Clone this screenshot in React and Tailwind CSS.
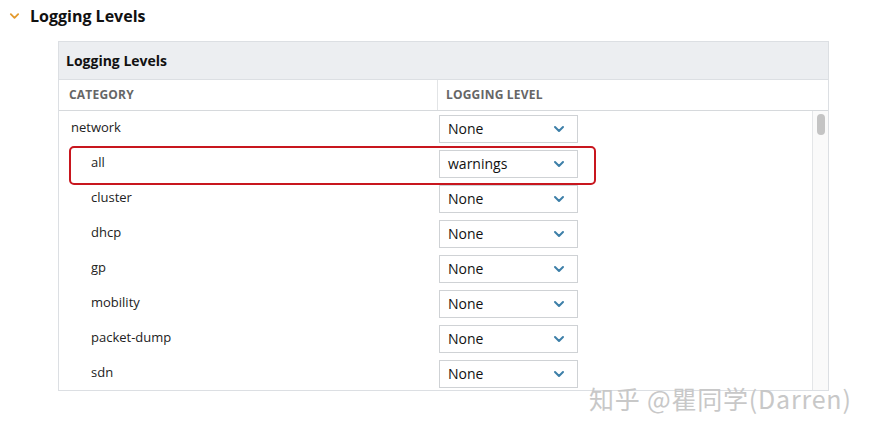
import React from 'react';

const rows = [
  { name: 'network', level: 'None', child: false },
  { name: 'all', level: 'warnings', child: true },
  { name: 'cluster', level: 'None', child: true },
  { name: 'dhcp', level: 'None', child: true },
  { name: 'gp', level: 'None', child: true },
  { name: 'mobility', level: 'None', child: true },
  { name: 'packet-dump', level: 'None', child: true },
  { name: 'sdn', level: 'None', child: true },
];

const Chevron = ({ className }) => (
  <svg viewBox="0 0 12 8" className={className} fill="none" stroke="currentColor" strokeWidth="2" strokeLinecap="round" strokeLinejoin="round">
    <path d="M2 2l4 4 4-4" />
  </svg>
);

const App = () => {
  return (
    <div className="relative w-[869px] h-[434px] bg-white overflow-hidden" style={{ fontFamily: '"Open Sans", "Noto Sans CJK SC", sans-serif' }}>
      {/* Section title */}
      <div className="flex items-center h-[32px] pl-[9px]">
        <Chevron className="w-[11px] h-[8px] text-[#e39a2d]" />
        <span className="ml-[10px] text-[16px] font-bold text-[#111]">Logging Levels</span>
      </div>

      {/* Panel */}
      <div className="ml-[58px] mt-[9px] w-[771px] border border-[#dcdfe3]">
        <div className="h-[38px] bg-[#eceef1] flex items-center px-[7px] border-b border-[#dcdfe3]">
          <span className="text-[14px] font-bold text-[#111]">Logging Levels</span>
        </div>
        <div className="flex h-[31px] border-b border-[#d6d9dc] text-[12px] font-bold text-[#666] tracking-[0.2px]">
          <div className="w-[379px] flex items-center pl-[10px] border-r border-[#e2e4e6]">CATEGORY</div>
          <div className="flex-1 flex items-center pl-[8px]">LOGGING LEVEL</div>
        </div>
        <div className="flex h-[279px] overflow-hidden">
          <div className="flex-1">
            {rows.map(r => (
              <div key={r.name} className="flex h-[35px] items-center">
                <div className={`w-[380px] text-[13px] text-[#222] -mt-[1px] ${r.child ? 'pl-[32px]' : 'pl-[12px]'}`}>{r.name}</div>
                <div className="w-[139px] h-[28px] border border-[#cfd2d5] flex items-center justify-between pl-[8px] pr-[12px] bg-white">
                  <span className="text-[14px] text-[#111]">{r.level}</span>
                  <Chevron className="w-[12px] h-[8px] text-[#3d7fa8]" />
                </div>
              </div>
            ))}
          </div>
          <div className="w-[16px] border-l border-[#e4e6e8] bg-[#fafafa] flex justify-center pt-[3px]">
            <div className="w-[8px] h-[21px] rounded-full bg-[#c4c4c4]" />
          </div>
        </div>
      </div>

      {/* Highlight */}
      <div className="absolute left-[69px] top-[146px] w-[527px] h-[39px] border-[2.5px] border-[#c8161e] rounded-[5px]" />

      {/* Watermark */}
      <div className="absolute left-[589px] top-[380px] text-[25px] text-[#c8c8c8] tracking-[0.8px]" style={{ fontFamily: '"Noto Sans CJK SC", "DejaVu Sans", sans-serif' }}>
        知乎 @瞿同学(Darren)
      </div>
    </div>
  );
};

export default App;
